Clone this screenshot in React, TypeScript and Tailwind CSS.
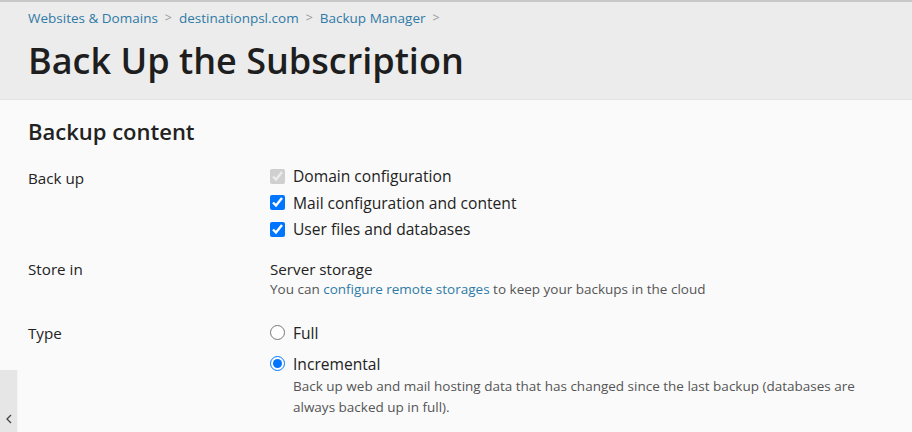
import React from "react";

export default function App() {
  const font = { fontFamily: '"Open Sans", "Noto Sans", sans-serif' };
  return (
    <div className="w-[912px] h-[432px] overflow-hidden bg-[#fafafa] relative text-[#222]" style={font}>
      <div className="h-[2px] bg-[#c8c8c8]" />
      <div className="bg-[#ececec] h-[98px] px-[28px] pt-[6px] border-b border-[#e4e4e4]">
        <div className="flex items-center gap-[7px] text-[13.5px] leading-[20px] text-[#2f7aa6]">
          <span>Websites &amp; Domains</span>
          <span className="text-[#9a9a9a] text-[12.5px]">&gt;</span>
          <span>destinationpsl.com</span>
          <span className="text-[#9a9a9a] text-[12.5px]">&gt;</span>
          <span>Backup Manager</span>
          <span className="text-[#9a9a9a] text-[12.5px]">&gt;</span>
        </div>
        <h1 className="mt-[11px] text-[36px] leading-[44px] font-semibold text-[#1e1e1e]">
          Back Up the Subscription
        </h1>
      </div>
      <div className="px-[28px] pt-[16px]">
        <h2 className="text-[22px] leading-[30px] font-semibold text-[#222]">Backup content</h2>
        <div className="mt-[17px] flex">
          <div className="w-[242px] text-[15.2px] leading-[26px] pt-[2px]">Back up</div>
          <div className="flex flex-col text-[15.6px] leading-[26.5px]">
            <label className="flex items-center gap-[8px] text-[#222]">
              <input type="checkbox" checked disabled readOnly className="w-[15px] h-[15px] m-0" />
              Domain configuration
            </label>
            <label className="flex items-center gap-[8px]">
              <input type="checkbox" checked readOnly className="w-[15px] h-[15px] m-0" />
              Mail configuration and content
            </label>
            <label className="flex items-center gap-[8px]">
              <input type="checkbox" checked readOnly className="w-[15px] h-[15px] m-0" />
              User files and databases
            </label>
          </div>
        </div>
        <div className="mt-[13px] flex">
          <div className="w-[242px] text-[15.2px] leading-[26px]">Store in</div>
          <div className="flex flex-col">
            <div className="text-[15.2px] leading-[26px]">Server storage</div>
            <div className="text-[13.5px] leading-[15px] text-[#555]">
              You can <span className="text-[#2f7aa6]">configure remote storages</span> to keep your backups in the cloud
            </div>
          </div>
        </div>
        <div className="mt-[23px] flex">
          <div className="w-[242px] text-[15.2px] leading-[26px]">Type</div>
          <div className="flex flex-col text-[15.6px]">
            <label className="flex items-center gap-[8px] leading-[26px]">
              <input type="radio" name="t" readOnly className="w-[15px] h-[15px] m-0" />
              Full
            </label>
            <label className="mt-[5px] flex items-center gap-[8px] leading-[26px]">
              <input type="radio" name="t" checked readOnly className="w-[15px] h-[15px] m-0" />
              Incremental
            </label>
            <div className="ml-[23px] mt-[-1px] w-[575px] text-[13.5px] leading-[21px] text-[#555]">
              Back up web and mail hosting data that has changed since the last backup (databases are always backed up in full).
            </div>
          </div>
        </div>
      </div>
      <div className="absolute left-0 top-[370px] w-[18px] h-[62px] bg-[#e6e6e6] border-r border-[#f4f4f4] flex items-end justify-center pb-[8px]">
        <svg width="6" height="10" viewBox="0 0 6 10" fill="none" stroke="#444" strokeWidth="1.3">
          <path d="M5 1 L1 5 L5 9" />
        </svg>
      </div>
    </div>
  );
}
